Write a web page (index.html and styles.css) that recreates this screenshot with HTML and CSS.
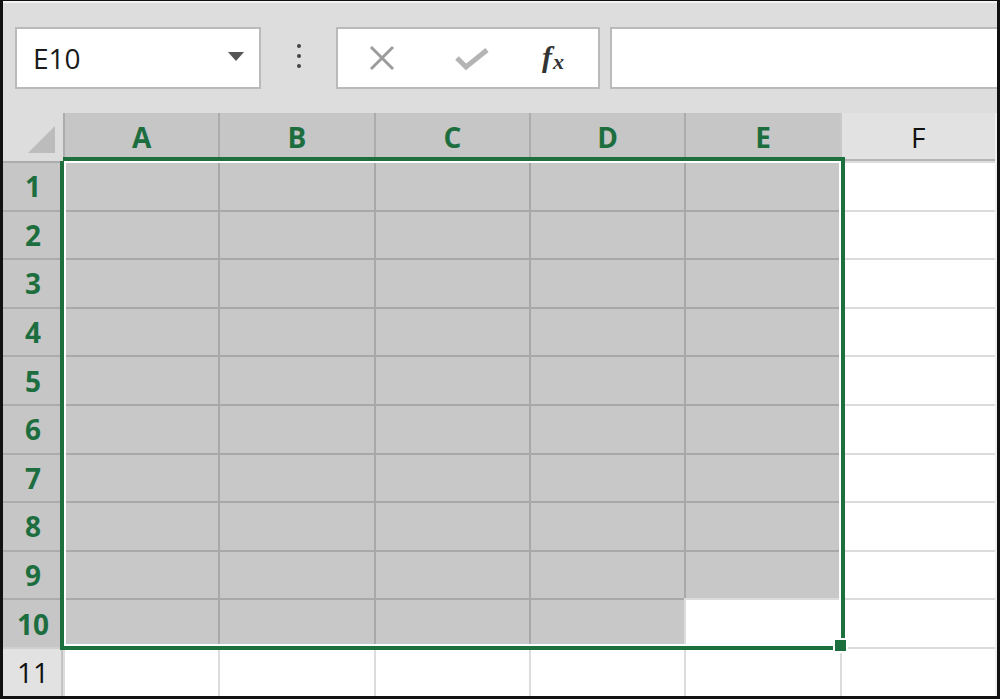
FILE: index.html
```html
<!DOCTYPE html>
<html lang="en">
<head>
    <meta charset="UTF-8">
    <title>Sheet</title>
    <link rel="stylesheet" href="styles.css">
</head>
<body>
    <div class="window">
        <div class="toolbar">
            <div class="name-box">
                <span class="name">E10</span>
                <span class="caret"></span>
            </div>
            <div class="grip">
                <span></span><span></span><span></span>
            </div>
            <div class="fx-box">
                <svg class="icon" width="28" height="28" viewBox="0 0 28 28">
                    <path d="M3 3 L25 25 M25 3 L3 25" stroke="#9c9c9c" stroke-width="3" fill="none"/>
                </svg>
                <svg class="icon" width="36" height="24" viewBox="0 0 36 24">
                    <path d="M3 11 L12 20 L33 3" stroke="#b4b4b4" stroke-width="5" fill="none"/>
                </svg>
                <span class="fx"><i>f</i><i class="x">x</i></span>
            </div>
            <div class="formula"></div>
        </div>

        <div class="sheet" id="sheet">
            <!-- selected range A1:E10 -->
            <div class="selection"></div>
            <div class="handle"></div>
        </div>
    </div>

    <script>
        const sheet = document.getElementById('sheet');
        const cols = ['A', 'B', 'C', 'D', 'E', 'F'];

        function add(cls, text) {
            const el = document.createElement('div');
            el.className = cls;
            if (text) el.textContent = text;
            sheet.appendChild(el);
        }

        // header row
        add('corner');
        cols.forEach((c, i) => add(i < 5 ? 'col-head sel' : 'col-head', c));

        // rows 1..11
        for (let r = 1; r <= 11; r++) {
            add(r <= 10 ? 'row-head sel' : 'row-head', String(r));
            cols.forEach((c, i) => {
                let cls = 'cell';
                if (r <= 10 && i < 5 && !(r === 10 && i === 4)) cls += ' sel';
                add(cls);
            });
        }
    </script>
</body>
</html>
```

FILE: styles.css
```css
* {
    box-sizing: border-box;
    margin: 0;
    padding: 0;
}

body {
    background: #000;
    font-family: 'Open Sans', 'Noto Sans', sans-serif;
}

.window {
    width: 1000px;
    height: 699px;
    border-style: solid;
    border-color: #111;
    border-width: 1px 3px 3px 3px;
    background: #dddddd;
    overflow: hidden;
    display: flex;
    flex-direction: column;
}

/* formula bar */
.toolbar {
    height: 112px;
    flex-shrink: 0;
    display: flex;
    align-items: flex-start;
    padding: 26px 0 0 12px;
    border-top: 2px solid #f2f2f2;
}

.name-box {
    width: 246px;
    height: 62px;
    margin-top: -2px;
    background: #fff;
    border: 2px solid #bababa;
    display: flex;
    align-items: center;
    justify-content: space-between;
    padding: 0 15px 0 16px;
}

.name {
    font-size: 28px;
    color: #1a1a1a;
}

.caret {
    width: 0;
    height: 0;
    border-left: 8px solid transparent;
    border-right: 8px solid transparent;
    border-top: 9px solid #555;
    margin-top: -4px;
}

.grip {
    width: 75px;
    height: 62px;
    margin-top: -2px;
    display: flex;
    flex-direction: column;
    align-items: center;
    justify-content: center;
    gap: 6px;
    padding-bottom: 4px;
}

.grip span {
    width: 4px;
    height: 4px;
    border-radius: 50%;
    background: #444;
}

.fx-box {
    width: 264px;
    height: 62px;
    margin-top: -2px;
    background: #fff;
    border: 2px solid #bababa;
    display: flex;
    align-items: center;
    padding: 0 0 0 30px;
}

.fx-box .icon {
    display: block;
}

.fx-box .icon:first-child {
    margin-right: 58px;
}

.fx-box .icon + .icon {
    margin-right: 52px;
    margin-top: 2px;
}

.fx {
    font-family: 'Liberation Serif', 'DejaVu Serif', serif;
    font-weight: bold;
    color: #333;
    font-size: 30px;
    line-height: 1;
    margin-top: -2px;
    display: flex;
    align-items: baseline;
}

.fx .x {
    font-size: 22px;
    margin-left: 1px;
    position: relative;
    top: 2px;
}

.formula {
    flex: 1;
    height: 62px;
    margin: -2px -10px 0 10px;
    background: #fff;
    border: 2px solid #bababa;
}

/* grid */
.sheet {
    position: relative;
    flex: 1;
    display: grid;
    grid-template-columns: 60px repeat(6, 1fr);
    grid-template-rows: 48px repeat(10, 48.6px) 1fr;
    background: #fff;
    border-right: 2px solid #f0f0f0;
}

.corner {
    background: #dddddd;
    position: relative;
}

.corner::after {
    content: '';
    position: absolute;
    right: 8px;
    bottom: 8px;
    width: 0;
    height: 0;
    border-left: 27px solid transparent;
    border-bottom: 27px solid #bcbcbc;
}

.col-head,
.row-head {
    display: flex;
    align-items: center;
    justify-content: center;
    font-size: 28px;
    color: #111;
    background: #e2e2e2;
}

.col-head {
    border-left: 2px solid #c9c9c9;
    border-bottom: 2px solid #b5b5b5;
    padding-top: 2px;
}

.row-head {
    border-top: 2px solid #cfcfcf;
    border-right: 2px solid #c4c4c4;
    padding-left: 2px;
}

.col-head.sel,
.row-head.sel {
    background: #c6c6c6;
    color: #1d6e3f;
    font-weight: bold;
    border-color: #acacac;
}

.row-head.sel {
    border-right-color: #d2d2d2;
}

.cell {
    border-left: 2px solid #dcdcdc;
    border-top: 2px solid #dcdcdc;
}

.cell.sel {
    background: #c8c8c8;
    border-color: #a8a8a8;
}

.selection {
    position: absolute;
    left: 57px;
    top: 44px;
    width: 785px;
    height: 493px;
    border: 4px solid #1e6f3e;
    box-shadow: inset 0 0 0 2px #fff;
    pointer-events: none;
}

.handle {
    position: absolute;
    left: 830px;
    top: 525px;
    width: 15px;
    height: 15px;
    background: #1e6f3e;
    border: 2px solid #fff;
}
```
